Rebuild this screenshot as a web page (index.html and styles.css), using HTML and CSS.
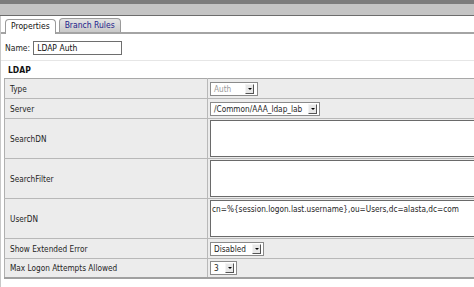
FILE: index.html
```html
<!doctype html>
<html>
<head>
	<meta charset="utf-8">
	<title>Access Policy - LDAP Auth</title>
	<link rel="stylesheet" href="styles.css">
</head>
<body>
	<div class="topbar"></div>
	<div class="toolbar"></div>
	<div class="page">
		<div class="tabs">
			<span class="tab on">Properties</span>
			<span class="tab">Branch Rules</span>
		</div>
		<div class="name-row">
			<label>Name:</label>
			<span class="input">LDAP Auth</span>
		</div>
		<h3 class="section">LDAP</h3>
		<div class="grid-wrap">
			<table class="props">
				<colgroup><col class="c-label"><col></colgroup>
				<tr>
					<td class="label">Type</td>
					<td class="value"><span class="select disabled">Auth<i class="drop"></i></span></td>
				</tr>
				<tr>
					<td class="label">Server</td>
					<td class="value"><span class="select">/Common/AAA_ldap_lab<i class="drop"></i></span></td>
				</tr>
				<tr class="tall">
					<td class="label">SearchDN</td>
					<td class="value"><div class="area"></div></td>
				</tr>
				<tr class="tall">
					<td class="label">SearchFilter</td>
					<td class="value"><div class="area"></div></td>
				</tr>
				<tr class="tall">
					<td class="label">UserDN</td>
					<td class="value"><div class="area">cn=%{session.logon.last.username},ou=Users,dc=alasta,dc=com</div></td>
				</tr>
				<tr>
					<td class="label">Show Extended Error</td>
					<td class="value"><span class="select">Disabled<i class="drop"></i></span></td>
				</tr>
				<tr>
					<td class="label">Max Logon Attempts Allowed</td>
					<td class="value"><span class="select">3<i class="drop"></i></span></td>
				</tr>
			</table>
		</div>
	</div>
</body>
</html>
```

FILE: styles.css
```css
* { margin: 0; padding: 0; box-sizing: border-box; }
html, body { overflow: hidden; height: 100%; }
body { background: #fff; font-family: "DejaVu Sans Condensed", "DejaVu Sans", Tahoma, sans-serif; font-size: 8.2px; color: #1e1e1e; }

.topbar { height: 4px; background: #7c7c7c; }
.toolbar { height: 12px; background: #c4c4c4; border-bottom: 1px solid #6c6c6c; }

.page { border-left: 1px solid #c8c8c8; height: 271px; }

.tabs { display: flex; align-items: flex-end; gap: 3px; padding: 2px 0 0 4px; border-bottom: 2px solid #a4a4a4; height: 18px; }
.tab { height: 14px; line-height: 12px; padding: 0 5px; border: 1px solid #9a9a9a; border-bottom: none; border-radius: 4px 4px 0 0; background: linear-gradient(#e4e4e4, #c9c9c9); color: #22228c; font-size: 8.5px; }
.tab.on { height: 15px; margin-bottom: -2px; background: #fff; color: #111; }

.name-row { display: flex; align-items: center; gap: 3px; padding: 7px 0 5px 4px; border-bottom: 1px solid #e6e6e6; }
.name-row label { font-size: 8.5px; }
.input { width: 89px; height: 14px; line-height: 12px; padding-left: 3px; border: 1px solid #6e6e6e; font-size: 8.5px; color: #111; }

.section { font-size: 8.5px; font-weight: bold; color: #111; padding: 4px 0 0 7px; height: 17px; }

.grid-wrap { padding-left: 3px; }
.props { width: 100%; table-layout: fixed; border-collapse: collapse; border-top: 1px solid #a8a8a8; border-bottom: 2px solid #a0a0a0; border-left: 1px solid #b0b0b0; }
.props .c-label { width: 203px; }
.props td { background: #ececec; border-bottom: 1px solid #b8b8b8; height: 20px; vertical-align: middle; }
.props tr.tall td { height: 40px; }
.props tr:last-child td { border-bottom: none; height: 19px; }
.props .label { padding-left: 5px; border-right: 1px solid #b8b8b8; }
.props .value { padding-left: 2px; }

.select { display: inline-flex; align-items: center; gap: 6px; height: 14px; padding: 0 2px 0 3px; border: 1px solid #8a8a8a; background: #fff; }
.select.disabled { color: #9a9a9a; padding-right: 3px; gap: 14px; }
.drop { position: relative; width: 9px; height: 10px; border: 1px solid; border-color: #f4f4f4 #555 #555 #f4f4f4; background: #e8e8e8; }
.drop::after { content: ""; position: absolute; left: 2px; top: 3px; border-left: 2px solid transparent; border-right: 2px solid transparent; border-top: 2px solid #000; }

.area { width: 100%; height: 37px; border: 1px solid #6a6a6a; border-right: none; background: #fff; padding: 3px 0 0 1px; white-space: nowrap; overflow: hidden; }
```
